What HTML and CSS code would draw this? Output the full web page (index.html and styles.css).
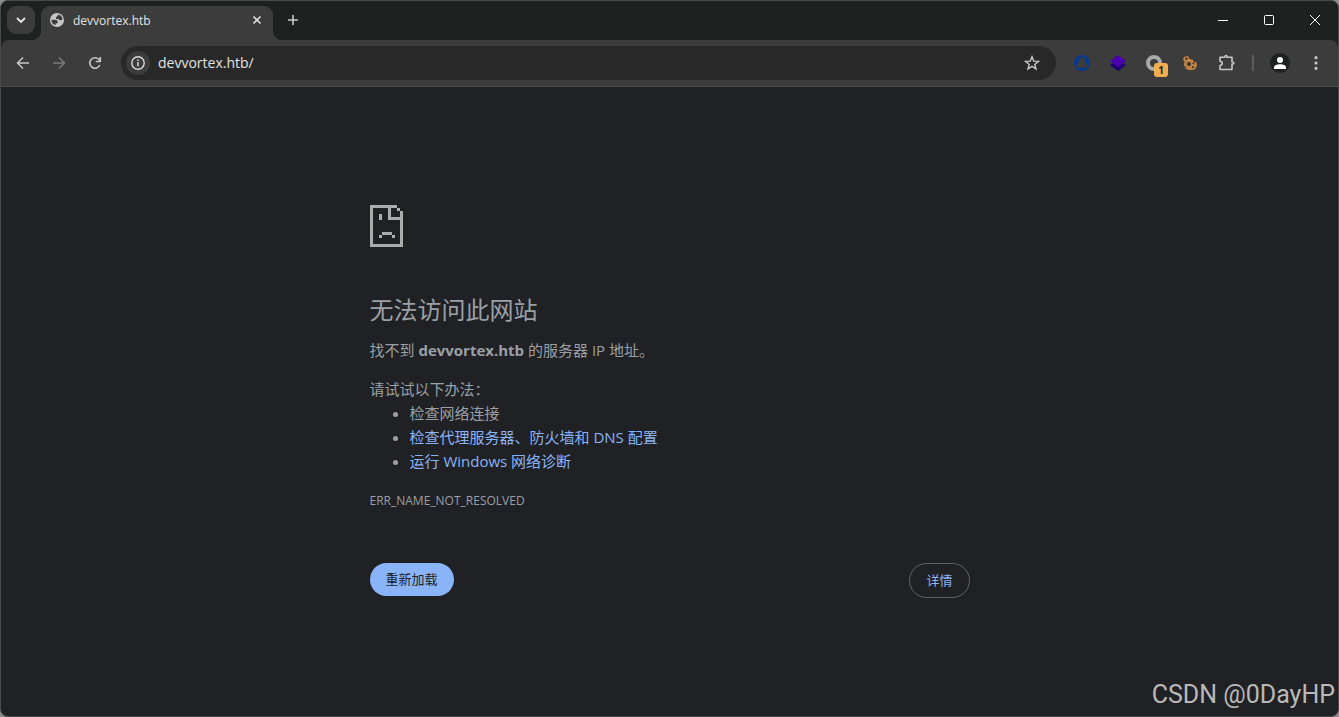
FILE: index.html
```html
<!DOCTYPE html>
<html lang="zh-CN">
<head>
    <meta charset="UTF-8">
    <meta name="viewport" content="width=device-width, initial-scale=1.0">
    <title>devvortex.htb</title>
    <link rel="stylesheet" href="styles.css">
</head>
<body>
    <div class="window">
        <header class="tab-strip">
            <button type="button" class="tab-search" aria-label="搜索标签页">
                <svg width="12" height="12" viewBox="0 0 12 12"><path d="M2 4l4 4 4-4" fill="none" stroke="#e8e8e8" stroke-width="1.8"/></svg>
            </button>
            <div class="tab">
                <svg width="14" height="14" viewBox="0 0 14 14"><circle cx="7" cy="7" r="7" fill="#c7c7c7"/><path d="M1.500 6.800h3.800c1.700 0 2.500.9 2.500 2.400 0 1-.8 1.400-2.300 1.400v1.600C3 11.500 1.300 9.500 1.500 6.800zM8.300 1.600c2.400.6 4.100 2.500 4.300 4.900-1.200 1-3.600 1.100-4 -.6H6c-.3-1.600.4-2.500 1.700-2.600 0-.8.100-1.200.6-1.700z" fill="#3c3c3c"/></svg>
                <span class="tab-title">devvortex.htb</span>
                <button type="button" class="icon-button tab-close" aria-label="关闭标签页">
                    <svg width="10" height="10" viewBox="0 0 10 10"><path d="M1.500 1.500l7 7M8.500 1.500l-7 7" stroke="#dedede" stroke-width="1.600"/></svg>
                </button>
            </div>
            <button type="button" class="icon-button new-tab" aria-label="打开新的标签页">
                <svg width="12" height="12" viewBox="0 0 12 12"><path d="M6 1v10M1 6h10" stroke="#c7c7c7" stroke-width="1.600"/></svg>
            </button>
            <div class="window-controls">
                <button type="button" class="icon-button" aria-label="最小化">
                    <svg width="10" height="10" viewBox="0 0 10 10"><path d="M0 5.500h10" stroke="#fff"/></svg>
                </button>
                <button type="button" class="icon-button" aria-label="最大化">
                    <svg width="10" height="10" viewBox="0 0 10 10"><rect x=".5" y=".5" width="9" height="9" rx="1" fill="none" stroke="#fff"/></svg>
                </button>
                <button type="button" class="icon-button" aria-label="关闭">
                    <svg width="10" height="10" viewBox="0 0 10 10"><path d="M0 0l10 10M10 0L0 10" stroke="#fff"/></svg>
                </button>
            </div>
        </header>

        <div class="toolbar-wrap">
            <nav class="toolbar">
                <button type="button" class="icon-button nav-button" aria-label="返回">
                    <svg width="14" height="14" viewBox="0 0 14 14"><path d="M13 7H2M7 1.500L1.500 7 7 12.500" fill="none" stroke="#c7c7c7" stroke-width="1.500"/></svg>
                </button>
                <button type="button" class="icon-button nav-button" aria-label="前进">
                    <svg width="14" height="14" viewBox="0 0 14 14"><path d="M1 7h11M7 1.500L12.500 7 7 12.500" fill="none" stroke="#7b7b7b" stroke-width="1.500"/></svg>
                </button>
                <button type="button" class="icon-button nav-button" aria-label="重新加载">
                    <svg width="14" height="14" viewBox="0 0 14 14"><path d="M11.800 9A5.200 5.200 0 1 1 10.700 3.300L12 4.700M12.300 1v4.500H7.800" fill="none" stroke="#c7c7c7" stroke-width="1.600"/></svg>
                </button>
                <div class="omnibox">
                    <button type="button" class="icon-button site-info" aria-label="查看网站信息">
                        <svg width="14" height="14" viewBox="0 0 14 14"><circle cx="7" cy="7" r="6.200" fill="none" stroke="#dadada" stroke-width="1.400"/><path d="M7 6v4.300M7 3.500v1.500" stroke="#dadada" stroke-width="1.500"/></svg>
                    </button>
                    <input type="text" class="address" aria-label="地址和搜索栏" value="devvortex.htb/">
                    <button type="button" class="icon-button bookmark" aria-label="添加书签">
                        <svg width="16" height="16" viewBox="0 0 16 16"><path d="M8 1.800l1.700 4.300 4.700.3-3.600 3 1.200 4.500L8 11.400l-4 2.500 1.200-4.500-3.600-3 4.700-.3z" fill="none" stroke="#c7c7c7" stroke-width="1.400"/></svg>
                    </button>
                </div>
                <div class="extensions">
                    <button type="button" class="icon-button ext" aria-label="扩展程序一">
                        <svg width="16" height="16" viewBox="0 0 16 16"><circle cx="8" cy="8" r="8" fill="#07398f"/><path d="M8 2c1.500 0 2.500 1 2.700 2.500.2 2 .8 3.100 1.900 4.400.9 1 1.500 2.700.6 3.300-.7.500-1.700.2-2.500.2-1 0-1.500.6-2.700.6s-1.700-.6-2.700-.6c-.8 0-1.800.3-2.500-.2-.9-.6-.3-2.300.6-3.300 1.100-1.300 1.700-2.400 1.900-4.400C5.500 3 6.500 2 8 2z" fill="#3c3c3c"/></svg>
                    </button>
                    <button type="button" class="icon-button ext" aria-label="扩展程序二">
                        <svg width="16" height="16" viewBox="0 0 16 16"><path d="M0 10l2-1.500h12l2 1.500-8 6z" fill="#1f0070"/><path d="M8 0l8 6-8 6-8-6z" fill="#4a00b0"/></svg>
                    </button>
                    <button type="button" class="icon-button ext" aria-label="扩展程序三">
                        <svg width="16" height="16" viewBox="0 0 16 16"><circle cx="8" cy="8" r="6" fill="none" stroke="#aaa" stroke-width="4"/></svg>
                        <span class="badge">1</span>
                    </button>
                    <button type="button" class="icon-button ext" aria-label="扩展程序四">
                        <svg width="16" height="16" viewBox="0 0 16 16"><path d="M4.500 1l2 .5 1 2.500 3 .5 1.500 2 2.500 1 .5 3-2 4-3 .5-3 .2-4-2-1-3.500.5-3L1 4.500 2 2z" fill="#bd8245"/><circle cx="4.400" cy="3.600" r="1.200" fill="#3c3030"/><circle cx="7" cy="9" r="2" fill="#3c3030"/><circle cx="11.500" cy="8.200" r="1" fill="#3c3030"/><circle cx="11" cy="12.300" r="1" fill="#3c3030"/><circle cx="3.500" cy="12" r=".7" fill="#3c3030"/></svg>
                    </button>
                    <button type="button" class="icon-button ext" aria-label="扩展程序">
                        <svg width="18" height="18" viewBox="0 0 18 18"><path d="M3 3.200h5V2.500a1 1 0 0 1 2 0v.7h5v4.800h.8a1 1 0 0 1 0 2H15v5.500H3v-4c3-.3 3-4 0-4.300z" fill="none" stroke="#c7c7c7" stroke-width="1.600" stroke-linejoin="round"/></svg>
                    </button>
                </div>
                <span class="divider"></span>
                <button type="button" class="icon-button profile" aria-label="个人资料">
                    <svg width="20" height="20" viewBox="0 0 20 20"><circle cx="10" cy="10" r="10" fill="#1f2120"/><circle cx="10" cy="7" r="3" fill="#fff"/><path d="M4 16v-1.500C4 12.300 7 11.200 10 11.200s6 1.100 6 3.300V16z" fill="#fff"/></svg>
                </button>
                <button type="button" class="icon-button menu" aria-label="自定义及控制">
                    <svg width="4" height="14" viewBox="0 0 4 14"><path d="M2 1.700h.01M2 7h.01M2 12.300h.01" stroke="#c7c7c7" stroke-width="3.200" stroke-linecap="round"/></svg>
                </button>
            </nav>
        </div>

        <main class="page">
            <div class="error">
                <svg class="error-icon" width="33" height="42" viewBox="0 0 33 42" shape-rendering="crispEdges"><path fill="#acacac" d="M0 0h27v3h3v3h3v36H0zM3 3v36h27V15H18V3zM21 3v9h9V6h-3V3zM9 9h3v6H9zM12 27h10v3H12zM9 30h3v3H9zM22 30h3v3h-3z" fill-rule="evenodd"/></svg>
                <h1>无法访问此网站</h1>
                <p>找不到 <strong>devvortex.htb</strong> 的服务器 IP 地址。</p>
                <div class="suggestions">
                    <p>请试试以下办法：</p>
                    <ul>
                        <li>检查网络连接</li>
                        <li><a href="#proxy">检查代理服务器、防火墙和 DNS 配置</a></li>
                        <li><a href="#diagnose">运行 Windows 网络诊断</a></li>
                    </ul>
                </div>
                <div class="error-code">ERR_NAME_NOT_RESOLVED</div>
                <div class="buttons">
                    <button type="button" class="reload">重新加载</button>
                    <button type="button" class="details">详情</button>
                </div>
            </div>
        </main>
    </div>
    <div class="watermark">CSDN @0DayHP</div>
</body>
</html>
```
FILE: styles.css
```css
* {
    box-sizing: border-box;
}

body {
    margin: 0;
    background-color: #8c8c8c;
    font-family: "Open Sans", "Noto Sans CJK SC", sans-serif;
}

button {
    font-family: inherit;
    border: none;
    cursor: pointer;
}

svg {
    display: block;
}

.window {
    min-height: 100vh;
    display: flex;
    flex-direction: column;
    overflow: hidden;
    border: 1px solid #48494c;
    border-radius: 8px;
    background-color: #202124;
}

.icon-button {
    display: flex;
    align-items: center;
    justify-content: center;
    padding: 0;
    background: none;
}

/* tabs */
.tab-strip {
    height: 39px;
    display: flex;
    align-items: flex-start;
    background-color: #1f2120;
}

.tab-search {
    display: flex;
    align-items: center;
    justify-content: center;
    width: 28px;
    height: 28px;
    margin: 5px 6px 0;
    padding: 0;
    border-radius: 9px;
    background-color: #3c3c3c;
}

.tab {
    position: relative;
    display: flex;
    align-items: center;
    width: 232px;
    height: 34px;
    margin-top: 5px;
    padding: 0 7px 6px 9px;
    border-radius: 9px 9px 0 0;
    background-color: #3c3c3c;
}

.tab::before,
.tab::after {
    content: "";
    position: absolute;
    bottom: 0;
    width: 9px;
    height: 9px;
}

.tab::before {
    right: 100%;
    background: radial-gradient(circle at 0 0, transparent 9px, #3c3c3c 9px);
}

.tab::after {
    left: 100%;
    background: radial-gradient(circle at 100% 0, transparent 9px, #3c3c3c 9px);
}

.tab-title {
    flex: 1;
    margin-left: 9px;
    color: #e3e3e3;
    font-size: 12px;
}

.tab-close {
    width: 18px;
    height: 18px;
}

.new-tab {
    width: 28px;
    height: 28px;
    margin: 5px 0 0 6px;
}

.window-controls {
    display: flex;
    margin-left: auto;
}

.window-controls .icon-button {
    width: 46px;
    height: 38px;
}

/* toolbar */
.toolbar-wrap {
    background-color: #1f2120;
}

.toolbar {
    display: flex;
    align-items: center;
    height: 47px;
    padding: 0 8px 0 4px;
    border-bottom: 1px solid #4a4b4d;
    border-radius: 8px 8px 0 0;
    background-color: #3c3c3c;
}

.nav-button {
    width: 36px;
    height: 34px;
}

.omnibox {
    flex: 1;
    display: flex;
    align-items: center;
    height: 34px;
    margin-left: 8px;
    padding: 0 12px 0 5px;
    border-radius: 17px;
    background-color: #282828;
}

.site-info {
    width: 24px;
    height: 24px;
    border-radius: 50%;
    background-color: #3c3c3c;
}

.address {
    flex: 1;
    min-width: 0;
    margin: 0 8px;
    padding: 0 0 2px;
    border: none;
    outline: none;
    background: none;
    color: #e3e3e3;
    font-family: inherit;
    font-size: 14px;
}

.bookmark {
    width: 24px;
    height: 24px;
}

.extensions {
    display: flex;
    margin-left: 8px;
}

.ext {
    position: relative;
    width: 36px;
    height: 34px;
}

.badge {
    position: absolute;
    top: 17px;
    left: 18px;
    width: 14px;
    height: 14px;
    border-radius: 3px;
    background-color: #f2ad4e;
    color: #202124;
    font-size: 10px;
    font-weight: bold;
    line-height: 14px;
}

.divider {
    width: 2px;
    height: 16px;
    margin: 0 16px 0 8px;
    background-color: #5c5c5c;
}

.profile {
    width: 20px;
    height: 20px;
}

.menu {
    width: 28px;
    height: 28px;
    margin-left: 12px;
}

/* error page */
.page {
    flex: 1;
    padding: 118px 24px 24px;
    color: #9aa0a6;
    font-size: 15px;
    line-height: 24px;
}

.error {
    max-width: 600px;
    margin: 0 auto;
}

h1 {
    margin: 48px 0 13px;
    font-size: 24px;
    font-weight: normal;
    line-height: 30px;
}

p {
    margin: 0;
}

.suggestions {
    margin-top: 15px;
}

ul {
    margin: 0;
    padding-left: 40px;
}

a {
    color: #8ab4f8;
    text-decoration: none;
}

.error-code {
    margin-top: 18px;
    font-size: 12px;
    line-height: 20px;
}

.buttons {
    display: flex;
    align-items: flex-start;
    justify-content: space-between;
    margin-top: 52px;
}

.reload,
.details {
    padding: 8px 16px;
    border-radius: 20px;
    font-size: 13px;
    line-height: 17px;
}

.reload {
    background-color: #8ab4f8;
    color: #202124;
}

.details {
    border: 1px solid #5f6368;
    background: none;
    color: #8ab4f8;
}

.watermark {
    position: absolute;
    right: 4px;
    bottom: 6px;
    color: #b9b9ba;
    font-family: Roboto, sans-serif;
    font-size: 25px;
    line-height: 32px;
}
```
